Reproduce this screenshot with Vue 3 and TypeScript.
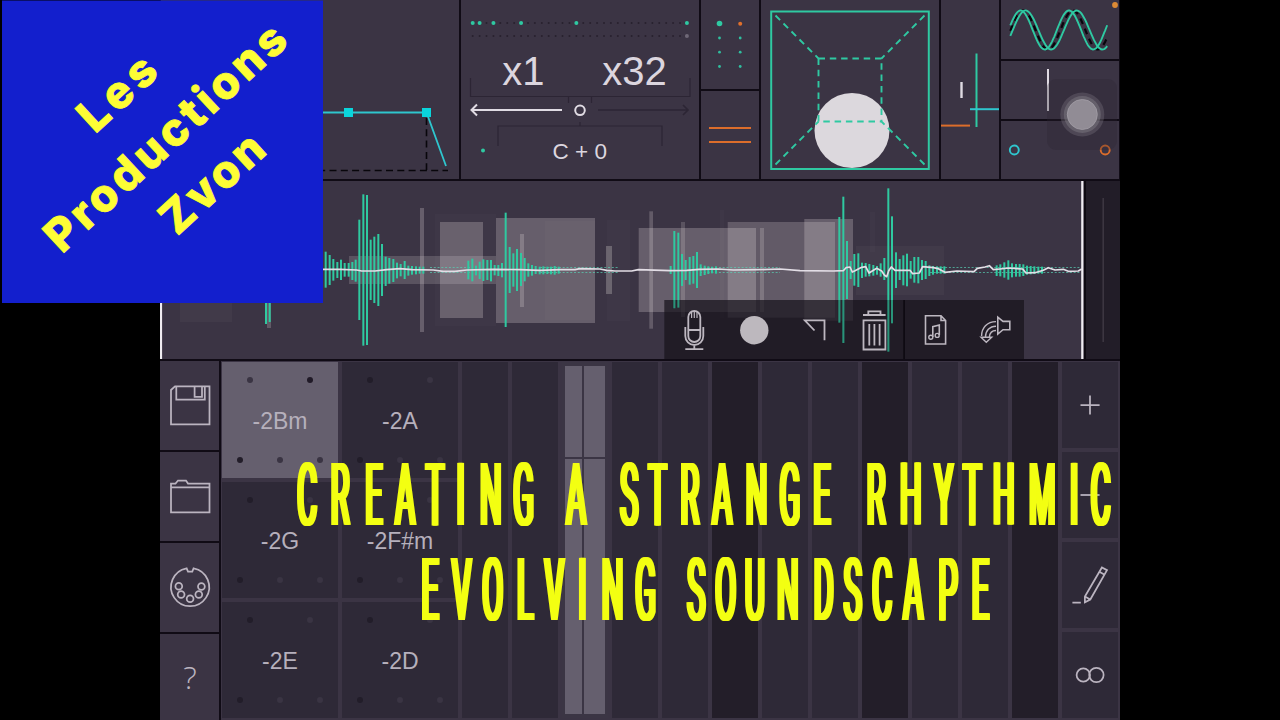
<script setup lang="ts">
type Bar = [number, number, number]

const wavesLeft: Bar[] = [
  [17,215,323],[29,225,315],[40,237,302],[52,246,294],[63,239,300],[74,249,290],[86,249,290],[97,246,300],[107,239,305],
  [118,119,420],[130,43,497],[141,45,495],[152,179,360],[163,170,369],[175,162,378],[186,192,348],[197,230,318],[208,234,311],
  [220,237,306],[231,248,295],[242,252,289],[254,243,297],[265,257,287],[276,258,284],[288,259,283],[299,260,281],[310,260,281],
  [445,242,298],[457,236,304],[468,257,286],[479,245,297],[490,238,303],[502,240,300],[513,240,304],[524,255,286],[535,255,288],
  [546,249,292],[557,98,441],[569,201,339],[580,220,320],[591,207,333],[603,219,318],[614,234,304],[625,250,290],[636,255,287],
  [647,258,282],[659,260,283],[670,259,283],[682,260,282],[693,260,283],[704,258,284],[716,260,281],
  [1052,258,282],[1063,153,385],[1075,158,383],[1086,222,318],[1097,240,300],[1109,231,314],[1120,228,311],[1131,216,324],
  [1142,253,288],[1154,257,285],[1165,259,282],[1176,260,280],[1188,259,281],
]
const wavesRight: Bar[] = [
  [418,111,428],[430,50,489],[441,183,357],[452,243,297],[463,222,317],[475,220,321],[486,248,294],[497,249,290],[508,252,289],
  [520,255,287],[531,258,284],[542,250,290],[553,234,300],[565,25,515],[576,109,430],[588,217,324],[599,237,300],[610,226,316],
  [621,221,319],[632,243,296],[643,231,308],[655,231,310],[666,240,300],[677,243,297],[688,256,288],[699,258,284],[711,259,281],
  [722,259,281],[733,259,281],[890,256,288],[901,253,289],[913,247,293],[925,241,299],[936,250,292],[948,252,290],[959,252,290],
  [970,253,288],[981,257,284],[992,258,283],[1003,259,282],[1015,260,281],[1026,260,281],
]
const scaleBars = (list: Bar[], ox: number) =>
  list.map(([x, t, b]) => ({ x: ox + x / 3 - 1, y: 180 + t / 3, h: (b - t) / 3 }))
const bars = [
  ...scaleBars(wavesLeft, 320),
  ...scaleBars(wavesRight, 700),
  { x: 265, y: 216, h: 108 },
  { x: 268.7, y: 218, h: 104 },
]

const tracePoints = (list: number[], ox: number) => {
  const out: string[] = []
  for (let i = 0; i < list.length; i += 2) out.push(`${(ox + list[i] / 3).toFixed(1)},${(180 + list[i + 1] / 3).toFixed(1)}`)
  return out.join(' ')
}
const trace =
  tracePoints([0,268,60,268,110,270,125,273,165,273,200,269,240,266,275,269,340,270,370,274,405,274,440,270,520,268,600,269,660,271,720,269,765,269,780,266,840,267,860,271,885,273,935,273,955,269,1050,272,1100,271,1138,268], 320) +
  ' ' +
  tracePoints([0,268,55,267,100,270,170,269,240,267,300,272,400,273,430,272,438,263,450,261,457,276,465,272,475,267,485,262,497,260,507,279,530,265,545,273,553,285,560,290,566,272,574,261,585,271,630,271,638,281,658,279,668,260,700,263,715,266,735,277,770,273,822,275,832,265,855,261,868,257,880,269,900,267,925,264,968,267,978,279,1005,278,1030,271,1045,263,1065,270,1090,268,1105,274,1135,273,1145,267], 700)

const slices = [
  [349, 256, 147, 28, 0.16], [440, 222, 43, 96, 0.22], [496, 218, 99, 105, 0.22], [420, 208, 4, 124, 0.22],
  [520, 234, 4, 73, 0.2], [606, 246, 6, 48, 0.24], [649.3, 211.3, 3.7, 117.4, 0.2], [638.7, 228, 117.3, 84, 0.22],
  [681, 222, 4, 95, 0.16], [727.7, 222, 107.3, 95.7, 0.2], [760, 228, 4, 84, 0.18], [804.3, 219, 48.7, 101.7, 0.22],
  [435, 214, 61, 112, 0.02], [607, 220, 23, 101, 0.02], [856, 246, 88, 49, 0.03], [180, 230, 52, 92, 0.03],
  [267, 300, 4, 28, 0.2], [545, 221, 50, 99, 0.02], [720, 210, 4, 108, 0.02], [870, 212, 5, 40, 0.02],
]

const steps = Array.from({ length: 32 }, (_, i) => 472.7 + i * 6.91)
const litSteps = [0, 1, 3, 7, 15, 31]

const sine = (peak: number, period: number) => {
  const pts: string[] = []
  for (let x = 1010.3; x <= 1108; x += 1.02)
    pts.push(`${x.toFixed(1)},${(30 - 19.5 * Math.cos(((x - peak) / period) * 2 * Math.PI)).toFixed(2)}`)
  return pts.join(' ')
}
const waveA = sine(1025.6, 51.2)
const waveB = sine(1020.6, 48.4)
const waveMid = sine(1023.1, 49.8)

const pads = ['-2Bm', '-2A', '-2G', '-2F#m', '-2E', '-2D']
const keys = ['', '', 'held', '', '', 'sharp', '', '', 'sharp', '', '', 'sharp']

const squeeze = 0.345
const words = [
  { t: 'CREATING', y: 524.8, c: [307.2, 340, 373.9, 405.2, 435.2, 460.5, 490.8, 523.7] },
  { t: 'A', y: 524.8, c: [576.2] },
  { t: 'STRANGE', y: 524.8, c: [629.2, 657.5, 689.8, 722.2, 756.5, 789.8, 821.9] },
  { t: 'RHYTHMIC', y: 524.8, c: [876.2, 910.8, 943.8, 972.3, 1003.8, 1042.2, 1074.2, 1100.5] },
  { t: 'EVOLVING', y: 619.8, c: [430.2, 461.7, 492.7, 525.2, 554.5, 582.5, 612.5, 645.5] },
  { t: 'SOUNDSCAPE', y: 619.8, c: [696.2, 725.7, 754.8, 787.8, 823.8, 852.8, 882.2, 913.2, 948, 980.5] },
]
const glyphX = (c: number[]) => c.map((v) => (v / squeeze).toFixed(1)).join(' ')
</script>

<template>
  <div class="stage">
    <main class="synth">
      <section class="top">
        <div class="panel">
          <svg viewBox="160 0 300 180">
            <path d="M160 170.5H448M426.5 118V170" class="dash-black" />
            <path d="M160 112.5H426.5L446 166" class="cyan" stroke-width="1.8" />
            <path d="M344 108h9v9h-9zM422 108h9v9h-9z" fill="#0ad5dc" />
          </svg>
        </div>
        <div class="panel">
          <svg viewBox="460 0 240 180">
            <circle v-for="(x, i) in steps" :key="i" :cx="x" cy="23" :r="litSteps.includes(i) ? 2 : 1" :fill="litSteps.includes(i) ? '#2fc9a2' : '#28212e'" />
            <circle v-for="(x, i) in steps" :key="'b' + i" :cx="x" cy="36" :r="i === 31 ? 2 : 1" :fill="i === 31 ? '#6f6877' : '#28212e'" />
            <text x="523.3" y="85.2" font-size="40">x1</text>
            <text x="634.6" y="85.2" font-size="40">x32</text>
            <path d="M470.5 78V96.5H690V78M568.5 97v6M591.5 97v6M498 146V126H662V146M580 122v4" class="faint" stroke-width="1.2" />
            <path d="M598 110H688M683 105l5 5-5 5" class="faint" stroke-width="1.6" />
            <path d="M562 110H472M477 104.5l-5.5 5.5 5.5 5.5" class="white" stroke-width="2" />
            <circle cx="580" cy="110.3" r="4.8" class="white" stroke-width="2" />
            <circle cx="483" cy="150.5" r="2" fill="#2fc9a2" />
            <text x="579.7" y="159" font-size="22.5">C + 0</text>
          </svg>
        </div>
        <div class="stack">
          <div class="panel">
            <svg viewBox="700 0 60 90">
              <g fill="#2fbf9f">
                <circle cx="719.5" cy="23.5" r="2.8" fill="#2fc9a2" />
                <circle cx="740.2" cy="23.7" r="2" fill="#e0702c" />
                <template v-for="y in [38, 52.2, 66.5]" :key="y">
                  <circle cx="719.5" :cy="y" r="1.4" /><circle cx="740.2" :cy="y" r="1.4" />
                </template>
              </g>
            </svg>
          </div>
          <div class="panel under">
            <svg viewBox="700 90 60 90"><path d="M709 128H751M709 142H751" class="orange" stroke-width="2.2" /></svg>
          </div>
        </div>
        <div class="panel">
          <svg viewBox="760 0 180 180">
            <circle cx="852" cy="130.5" r="37.5" fill="#dcd8dd" />
            <path d="M771.2 11.5H928.8V169H771.2Z" class="green" stroke-width="2" />
            <path d="M775.5 15.5L818.5 58.5M924.5 15.5L881.5 58.5M775.5 164.5L818.5 121.5M924.5 164.5L881.5 121.5M818.5 58.5H881.5V121.5M818.5 58.5V121.5H881.5" class="green" stroke-width="1.9" stroke-dasharray="6.5 4.8" />
          </svg>
        </div>
        <div class="panel">
          <svg viewBox="940 0 60 180">
            <path d="M961.5 82V98" class="white" stroke-width="2.4" />
            <path d="M976.5 53.5V127" class="green" stroke-width="2" />
            <path d="M970 109.2H999" class="cyan" stroke-width="2" />
            <path d="M941 125.6H970" class="orange" stroke-width="2" />
          </svg>
        </div>
        <div class="stack triple">
          <div class="panel">
            <svg viewBox="1000 0 120 60">
              <polyline :points="waveMid" fill="none" stroke="#08060c" stroke-width="2.2" stroke-dasharray="6 5" />
              <polyline :points="waveA" class="green" stroke-width="1.9" />
              <polyline :points="waveB" class="green" stroke-width="1.9" />
              <circle cx="1115" cy="5" r="2.9" fill="#dc8a35" />
            </svg>
          </div>
          <div class="panel under"><svg viewBox="1000 60 120 60"><path d="M1048 69V111" class="white" stroke-width="2" /></svg></div>
          <div class="panel under">
            <svg viewBox="1000 120 120 60">
              <circle cx="1014.3" cy="150" r="4.5" class="cyan" stroke-width="1.9" />
              <circle cx="1105.2" cy="150" r="4.5" class="orange" stroke-width="1.9" />
            </svg>
          </div>
          <svg class="touch" viewBox="1045 77 74 75">
            <rect x="1047" y="79" width="70" height="71" rx="9" fill="#2a2432" opacity=".3" />
            <circle cx="1082.3" cy="114.5" r="22" fill="#7a7580" opacity=".35" />
            <circle cx="1082.3" cy="114.5" r="18.5" fill="#837e88" opacity=".45" />
            <circle cx="1082.3" cy="114.5" r="15" fill="#918c95" stroke="#a39ea7" stroke-width=".8" />
          </svg>
        </div>
      </section>

      <section class="wave">
        <svg viewBox="160 180 960 180">
          <rect x="160" y="180" width="960" height="180" fill="#3b3444" />
          <rect x="1086" y="180" width="34" height="180" fill="#221d28" />
          <rect x="1084" y="180" width="2" height="180" fill="#0d0911" />
          <rect x="1102.4" y="198" width="1.6" height="144" fill="#3c3641" />
          <rect v-for="(s, i) in slices" :key="i" :x="s[0]" :y="s[1]" :width="s[2]" :height="s[3]" fill="#fff7f4" :opacity="s[4]" />
          <rect x="664.3" y="300" width="359.7" height="60" fill="#17131b" opacity=".71" />
          <path d="M430 267.5H470M540 267.5H618M700 267.5H780M930 267.5H1081M430 272.5H470M540 272.5H618M700 272.5H780M930 272.5H1081" stroke="#58d0b4" stroke-width="1" stroke-dasharray="2 1.78" opacity=".7" />
          <rect v-for="(b, i) in bars" :key="'w' + i" :x="b.x" :y="b.y" width="2" :height="b.h" fill="#2fc9a0" />
          <path d="M843 300V344M888 300V352M839 300V323M892 300V324M674 300V309M678 300V308" stroke="#1d1822" stroke-width="3" opacity=".3" />
          <rect x="903.3" y="300" width="1.6" height="60" fill="#0d0911" />
          <polyline :points="trace" fill="none" stroke="#e3dee6" stroke-width="1.7" stroke-linejoin="round" />
          <path d="M1082.3 180V360M161 180V360" stroke="#efecf1" stroke-width="2.2" />
          <g class="icon">
            <path d="M688.3 336V317a6 6 0 0 1 12 0V336a6 6 0 0 1-12 0ZM688.3 330h12M685.3 327v9a9 9 0 0 0 18 0v-9M694.3 345v4M685.3 349.2h18" />
            <path d="M691.6 312v6M694.3 311v7M697 312v6" stroke-width="1.2" />
            <circle cx="754.3" cy="330.2" r="14.2" fill="#bdb8be" stroke="none" />
            <path d="M814.5 330.5L804.8 320.4H824.5V340.3" />
            <path d="M863 315H885.6M868.3 314.5V311.3H880.5V314.5M863.5 320.3H885.4V349.5H863.5ZM869.3 324V345.5M874.4 324V345.5M879.6 324V345.5" />
            <path d="M925.5 315.8H941L945.6 320.5V344H925.5ZM941 315.8V320.5H945.6M932.8 337V326.7L939.3 325V335" stroke-width="1.6" />
            <g stroke-width="1.4">
              <circle cx="930.8" cy="337.2" r="2" /><circle cx="937.2" cy="335.4" r="2" />
              <path d="M996 321.6C987 321.6 981.6 328 981.6 336M996 326.2C989.5 326.2 985.5 331 985.5 337M996 330.5C992 330.5 989.8 333 989.3 337M981 337.3H991.7L986.3 342.3Z" />
            </g>
            <path d="M997.8 317.2V334L1003 329.7H1009.8V321.4H1003Z" stroke-width="1.6" />
          </g>
        </svg>
      </section>

      <section class="board">
        <nav class="side">
          <div class="tool"><svg viewBox="160 360 60 91"><path class="ic" d="M175 386.3H209.5V424.3H171V390ZM176.3 386.3V399.6H204.8V386.3M194.6 386.3V396.8H202V386.3" /></svg></div>
          <div class="tool"><svg viewBox="160 451 60 91"><path class="ic" d="M171 512.3V483.5H175.5L178 480.5H186L188 483.5H209.5V512.3ZM171 487.3H209.5" /></svg></div>
          <div class="tool">
            <svg viewBox="160 542 60 91">
              <path class="ic" d="M186.6 568.3A19.1 19.1 0 1 0 193.6 568.3L192.3 571.6H188Z" />
              <g class="ic"><circle cx="178.8" cy="586.2" r="3.4" /><circle cx="201.4" cy="586.4" r="3.4" /><circle cx="181.1" cy="594.4" r="3.4" /><circle cx="198.8" cy="594.6" r="3.4" /><circle cx="190.1" cy="598.8" r="3.4" /></g>
            </svg>
          </div>
          <div class="tool help">?</div>
        </nav>
        <div class="pads">
          <div v-for="(p, i) in pads" :key="p" class="pad" :class="{ active: i === 0 }">
            <i class="row two"><b /><b /></i>
            <span>{{ p }}</span>
            <i class="row three"><b /><b /><b /></i>
          </div>
        </div>
        <div class="keys">
          <div v-for="(k, i) in keys" :key="i" class="key" :class="k">
            <template v-if="k === 'held'"><i /><i /><i /><i /></template>
          </div>
        </div>
        <nav class="edit">
          <div><svg viewBox="1062 362 56 86"><path class="ic" d="M1080.5 405H1099.6M1090 395.5V414.5" /></svg></div>
          <div><svg viewBox="1062 452 56 86"><path class="ic" d="M1080.5 495H1099.6" /></svg></div>
          <div><svg viewBox="1062 542 56 86"><path class="ic" d="M1084.9 602.3V596.5L1101.9 567.5L1107 570.2L1090.3 599.5ZM1084.9 596.5L1090.3 599.5M1099.3 571.7L1104.7 574.8M1072.4 602.7H1080.8" /></svg></div>
          <div><svg viewBox="1062 632 56 86"><circle class="ic" cx="1083.3" cy="675" r="6.7" /><circle class="ic" cx="1096.4" cy="675" r="7.2" /></svg></div>
        </nav>
      </section>
    </main>

    <svg class="overlay" viewBox="0 0 1280 720">
      <defs>
        <filter id="widen" filterUnits="userSpaceOnUse" x="280" y="440" width="860" height="200" color-interpolation-filters="sRGB">
          <feOffset in="SourceGraphic" dx="-2" result="a" />
          <feOffset in="SourceGraphic" dx="-1" result="b" />
          <feOffset in="SourceGraphic" dx="1" result="c" />
          <feOffset in="SourceGraphic" dx="2" result="d" />
          <feMerge>
            <feMergeNode in="a" /><feMergeNode in="b" /><feMergeNode in="SourceGraphic" />
            <feMergeNode in="c" /><feMergeNode in="d" />
          </feMerge>
        </filter>
      </defs>
      <rect x="2" y=".5" width="321" height="302.5" fill="#131fcd" />
      <g class="logo">
        <text transform="translate(95 134.5) rotate(-42.5)" textLength="89" lengthAdjust="spacing">Les</text>
        <text transform="translate(62 254.5) rotate(-42.8)" textLength="311" lengthAdjust="spacing">Productions</text>
        <text transform="translate(177 236.5) rotate(-42.5)" textLength="124" lengthAdjust="spacing">Zvon</text>
      </g>
      <g class="title" filter="url(#widen)">
        <text v-for="w in words" :key="w.t" :transform="`scale(${squeeze} 1)`" :x="glyphX(w.c)" :y="w.y">{{ w.t }}</text>
      </g>
    </svg>
  </div>
</template>

<style>
body { background: #000; }
</style>

<style scoped>
.stage { position: relative; width: 1280px; height: 720px; overflow: hidden; background: #000; font-family: "Liberation Sans", Arial, sans-serif; }
svg { display: block; width: 100%; height: 100%; }
.synth { width: 960px; height: 720px; margin: 0 auto; background: #3b3444; display: flex; flex-direction: column; }
.top { height: 180px; display: grid; grid-template-columns: 300px 240px 60px 180px 60px 120px; }
.panel { background: #3b3444; min-height: 0; position: relative; }
.panel::after { content: ""; position: absolute; inset: 0; box-shadow: inset 1px 0 #100b15, inset -1px 0 #100b15, inset 0 -1px #100b15; }
.panel.under::after { box-shadow: inset 0 0 0 1px #100b15; }
.stack { display: grid; grid-template-rows: 90px 90px; position: relative; }
.triple { grid-template-rows: 60px 60px 60px; }
.touch { position: absolute; left: 45px; top: 77px; width: 74px; height: 75px; }
.panel text { text-anchor: middle; fill: #dcd6df; }
.white, .green, .cyan, .orange, .faint, .dash-black { fill: none; }
.white { stroke: #e0dbe3; }
.green { stroke: #2fc9a2; }
.cyan { stroke: #2fc6ce; }
.orange { stroke: #dc6d2b; }
.faint { stroke: #2c2534; }
.dash-black { stroke: #08060b; stroke-width: 1.6; stroke-dasharray: 7 4.3; }

.wave { height: 180px; position: relative; }
.wave::after { content: ""; position: absolute; inset: 0; box-shadow: inset 0 1px #100b15, inset 0 -1px #100b15; }
.icon { fill: none; stroke: #bdb7c0; stroke-width: 1.8; }
.ic { fill: none; stroke: #bbb4c0; stroke-width: 1.75; }

.board { height: 360px; display: grid; grid-template-columns: 60px 240px 600px 60px; box-shadow: inset 0 1px #100b15; }
.side { display: grid; grid-template-rows: 91px 91px 91px 87px; }
.tool { box-shadow: inset 0 1px #100b15, inset -1px 0 #100b15, inset 0 -1px #100b15; }
.help { font: 300 32px/88px "Open Sans", sans-serif; color: #bbb4c0; text-align: center; box-shadow: inset 0 1px #100b15, inset -1px 0 #100b15; }
.pads { display: grid; grid-template: repeat(3, 116px) / repeat(2, 116px); gap: 4px; padding: 2px; box-shadow: inset 1px 0 #100b15, inset 0 1px #100b15; }
.pad { background: #2e2937; color: #b6b0bc; display: flex; flex-direction: column; align-items: center; padding: 15px 0; box-sizing: border-box; justify-content: space-between; font-size: 23px; line-height: 28px; }
.pad span { padding-top: 2px; }
.pad.active { background: #655f6e; }
.row { display: flex; justify-content: space-between; height: 6px; }
.two { width: 66px; }
.three { width: 86px; }
.row b { width: 6px; height: 6px; border-radius: 50%; background: #3a3443; }
.row b:first-child { background: #221d29; }
.active .two b:first-child { background: #3a3443; }
.active .two b:last-child { background: #201a27; }
.keys { display: grid; grid-template-columns: repeat(12, 46px); gap: 4px; padding: 2px; box-shadow: inset 0 1px #100b15; }
.key { background: #2e2937; }
.key.sharp { background: #231e29; }
.key.held { background: #3b3544; display: grid; grid-template: 91px 255px / 17px 20.5px; gap: 2.4px 2px; padding: 3.5px 3px; }
.held i { background: #655f6e; }
.edit { display: grid; grid-template-rows: repeat(4, 86px); gap: 4px; padding: 2px; box-shadow: inset 0 1px #100b15; }
.edit div { background: #2e2937; }

.overlay { position: absolute; inset: 0; }
.logo text { font: 800 45px Inter, sans-serif; fill: #fdfd35; stroke: #fdfd35; stroke-width: .8; }
.title text { font: 400 88px Roboto, sans-serif; fill: #f3ff12; text-anchor: middle; }
</style>
